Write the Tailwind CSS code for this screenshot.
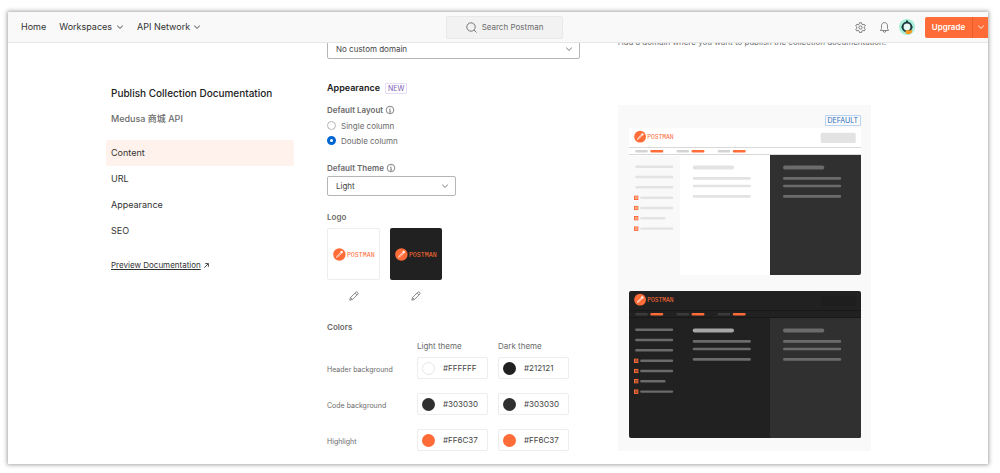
<!DOCTYPE html>
<html lang="en">
<head>
    <meta charset="UTF-8">
    <meta name="viewport" content="width=device-width, initial-scale=1.0">
    <title>Publish Collection Documentation</title>
    <script src="https://cdn.jsdelivr.net/npm/@tailwindcss/browser@4"></script>
</head>
<body class="bg-white pt-3 pr-3 pb-2 pl-2 font-['Inter','Noto_Sans_CJK_SC',sans-serif] text-[8px] leading-4 text-[#6b6b6b] antialiased">

    <!-- Shared icons -->
    <svg class="hidden" aria-hidden="true">
        <symbol id="chevron" viewBox="0 0 8 8"><path d="M1.2 2.7 4 5.4 6.8 2.7" fill="none" stroke="currentColor" stroke-width="0.9"/></symbol>
        <symbol id="info" viewBox="0 0 10 10"><circle cx="5" cy="5" r="3.8" fill="none" stroke="currentColor" stroke-width="0.8"/><path d="M4.2 4.5H5.1V7M4 7.1H6.1M4.6 2.9H5.4" fill="none" stroke="currentColor" stroke-width="0.8"/></symbol>
        <symbol id="pencil" viewBox="0 0 10 10"><path d="M.8 9.2 1.5 6.6 6.9 1.2Q7.7.4 8.6 1.4 9.6 2.3 8.8 3.1L3.4 8.5ZM1.5 6.6 3.4 8.5M6 2.1 7.9 4" fill="none" stroke="currentColor" stroke-width="0.8" stroke-linejoin="round"/></symbol>
        <symbol id="logo" viewBox="0 0 420 130">
            <circle cx="64" cy="65" r="62" fill="#ff6c37"/>
            <path d="M30 99 38 79 76 43 87 54 49 91Z" fill="#fff" fill-opacity=".9"/>
            <circle cx="87" cy="41" r="13" fill="#fff" fill-opacity=".9"/>
            <path d="M42 87 80 49" stroke="#ff6c37" stroke-width="6"/>
            <text x="139" y="87" font-family="Liberation Mono" font-size="66" fill="#ff6c37">POSTMAN</text>
        </symbol>
        <symbol id="method" viewBox="0 0 5 5"><rect x=".6" y=".6" width="3.8" height="3.8" fill="#ff6c37" fill-opacity=".35" stroke="#ff6c37" stroke-width="1.2"/><path d="M1.7 2.5H3.3" stroke="#ff6c37" stroke-width=".8"/></symbol>
        <!-- grey and orange pairs under the header -->
        <symbol id="tabs-orange" viewBox="0 0 232 147"><path d="M22.6 23.3H33M63.8 23.3H74.2M105 23.3H115.4" stroke="#ff6c37" stroke-width="2.6" stroke-linecap="round"/></symbol>
        <symbol id="tabs-grey" viewBox="0 0 232 147"><path d="M7.5 23.3H17.6M48.7 23.3H58.8M89.9 23.3H100" stroke="currentColor" stroke-width="2.6" stroke-linecap="round"/></symbol>
        <symbol id="side-lines" viewBox="0 0 232 147">
            <path d="M7.3 38.7H43M7.3 49H43M7.3 59.3H43M12.3 69.7H43M12.3 80H43M12.3 90.3H35.4M12.3 100.6H43" stroke="currentColor" stroke-width="2.4" stroke-linecap="round"/>
            <use href="#method" x="5" y="67.4" width="4.6" height="4.6"/>
            <use href="#method" x="5" y="77.7" width="4.6" height="4.6"/>
            <use href="#method" x="5" y="88" width="4.6" height="4.6"/>
            <use href="#method" x="5" y="98.3" width="4.6" height="4.6"/>
        </symbol>
        <symbol id="text-lines" viewBox="0 0 232 147"><path d="M65 50.4H120.6M65 58H120.6M65 68.4H120.6" stroke="currentColor" stroke-width="2.6" stroke-linecap="round"/></symbol>
    </svg>

    <div class="bg-white shadow-[0_0_4px_1px_rgba(0,0,0,0.35)]">

        <header class="relative z-10 flex h-[31px] items-center border-b border-[#e6e6e6] bg-[#f9f9f9] pl-2 text-[9px] text-[#333]">
            <nav class="flex flex-1 items-center gap-[13px] pl-[5px]">
                <a href="#">Home</a>
                <button class="flex items-center gap-1">Workspaces <svg class="size-2"><use href="#chevron"/></svg></button>
                <button class="flex items-center gap-[3px]">API Network <svg class="size-2"><use href="#chevron"/></svg></button>
            </nav>
            <button class="flex h-[23px] w-[117px] items-center justify-center gap-[5px] rounded-[2px] border border-[#e9e9e9] bg-[#f2f2f2] text-[8px] text-[#6b6b6b]">
                <svg class="size-[11px]" viewBox="0 0 11 11" fill="none" stroke="currentColor" stroke-width="0.9"><circle cx="5" cy="5" r="4.2"/><path d="M8 8 10.5 10.5"/></svg>
                Search Postman
            </button>
            <div class="flex flex-1 items-center justify-end">
                <button aria-label="Settings" class="mr-[13px] text-[#6b6b6b]">
                    <svg class="size-[11px]" viewBox="0 0 24 24" fill="none" stroke="currentColor" stroke-width="1.8" stroke-linejoin="round"><circle cx="12" cy="12" r="3.6"/><path d="M9.8 1.5h4.4l.7 3.2 2.3 1.3 3.1-1 2.2 3.8-2.4 2.2v2.4l2.4 2.2-2.2 3.8-3.1-1-2.3 1.3-.7 3.2H9.8l-.7-3.2-2.3-1.3-3.1 1-2.2-3.8 2.4-2.2V11L1.5 8.8 3.7 5l3.100 1 2.300-1.300Z"/></svg>
                </button>
                <button aria-label="Notifications" class="mr-[9px] text-[#6b6b6b]">
                    <svg class="size-[11px]" viewBox="0 0 11 11" fill="none" stroke="currentColor" stroke-width="0.8"><path d="M5.5 .6C3.3 .6 2.5 2.3 2.5 4V6.5L1.500 8.500H9.500L8.500 6.500V4C8.500 2.300 7.700 .6 5.500 .6ZM4.300 8.800Q4.300 10.400 5.500 10.400T6.700 8.800"/></svg>
                </button>
                <button aria-label="Account" class="mr-[10px]">
                    <svg class="size-4" viewBox="0 0 16 16"><circle cx="8" cy="8" r="8" fill="#a8f0d8"/><circle cx="8" cy="8" r="4.400" fill="#e9fbf5" stroke="#1f3d3f" stroke-width="2"/><path d="M7 1.500H9V4H7ZM2 8 4 6.500V9.500ZM14 8 12 6.500V9.500Z" fill="#1f3d3f"/><path d="M6.500 12Q8.500 10.200 10.500 11.600L13.500 11 12.500 14Q9.500 16.200 6.700 14.500Z" fill="#f79a1f"/></svg>
                </button>
                <div class="flex h-[21px] overflow-hidden rounded-l-[2px] bg-[#ff6c37] text-white">
                    <button class="w-[47px] text-[8px] font-semibold">Upgrade</button>
                    <button aria-label="More plans" class="flex w-4 items-center justify-center border-l border-[#e85f2e]"><svg class="size-2"><use href="#chevron"/></svg></button>
                </div>
            </div>
        </header>

        <main class="overflow-hidden pr-[117px] pb-[13px] pl-[98px]">
            <div class="-mt-[9px] flex items-start">

                <aside class="mr-[33px] w-[188px] shrink-0 pt-[51px] text-[9px] text-[#333]">
                    <h1 class="pl-[5px] text-[10px] font-medium whitespace-nowrap text-[#212121]">Publish Collection Documentation</h1>
                    <p class="mt-[10px] pl-[5px] font-medium text-[#6b6b6b]">Medusa 商城 API</p>
                    <nav class="mt-[13px] flex flex-col">
                        <a href="#" class="rounded-[2px] bg-[#fff1eb] px-[5px] py-[5px]">Content</a>
                        <a href="#" class="px-[5px] py-[5px]">URL</a>
                        <a href="#" class="px-[5px] py-[5px]">Appearance</a>
                        <a href="#" class="px-[5px] py-[5px]">SEO</a>
                    </nav>
                    <a href="#" class="mt-[13px] flex items-center gap-[3px] pl-[5px] text-[8px]">
                        <span class="underline underline-offset-1">Preview Documentation</span>
                        <svg class="size-[5px]" viewBox="0 0 5 5" fill="none" stroke="currentColor" stroke-width="0.9"><path d="M.4 4.600 4.300 .7M1.200 .6H4.400V3.800"/></svg>
                    </a>
                </aside>

                <form class="flex-1 pt-1">
                    <div class="relative">
                        <select aria-label="Custom domain" class="h-[21px] w-full appearance-none rounded-[2px] border border-[#b5b5b5] bg-white pl-2 text-[#444]"><option>No custom domain</option></select>
                        <svg class="pointer-events-none absolute top-[7px] right-[7px] size-2"><use href="#chevron"/></svg>
                    </div>

                    <div class="mt-[21px] flex items-center gap-[5px]">
                        <h2 class="text-[9px] font-semibold text-[#212121]">Appearance</h2>
                        <span class="rounded-[1px] border border-[#e6dcf7] px-[2px] text-[7px] leading-[9px] text-[#7d5bb5]">NEW</span>
                    </div>

                    <fieldset>
                        <legend class="flex items-center gap-[2px] pt-[6px] font-semibold">Default Layout <svg class="size-[10px]"><use href="#info"/></svg></legend>
                        <label class="flex h-[15px] items-center gap-[5px]">
                            <input type="radio" name="layout" class="size-[9px] appearance-none rounded-full border border-[#b5b5b5] checked:border-3 checked:border-[#0265d2]">
                            Single column
                        </label>
                        <label class="flex h-[15px] items-center gap-[5px]">
                            <input type="radio" name="layout" checked class="size-[9px] appearance-none rounded-full border border-[#b5b5b5] checked:border-3 checked:border-[#0265d2]">
                            Double column
                        </label>
                    </fieldset>

                    <label for="theme" class="mt-3 flex items-center gap-[2px] font-semibold">Default Theme <svg class="size-[10px]"><use href="#info"/></svg></label>
                    <div class="relative w-[129px]">
                        <select id="theme" class="block h-5 w-full appearance-none rounded-[2px] border border-[#b5b5b5] bg-white pl-2 text-[#444]"><option>Light</option></select>
                        <svg class="pointer-events-none absolute top-[6px] right-[7px] size-2"><use href="#chevron"/></svg>
                    </div>

                    <h3 class="mt-[13px] font-semibold">Logo</h3>
                    <div class="mt-[3px] flex gap-[10px]">
                        <div class="flex flex-col items-center gap-2">
                            <div class="flex h-[52px] w-[53px] items-center justify-center rounded-[2px] border border-[#ededed]"><svg class="h-[13px] w-[42px] shrink-0"><use href="#logo"/></svg></div>
                            <button type="button" aria-label="Edit light logo" class="flex size-4 items-center justify-center"><svg class="size-[10px]"><use href="#pencil"/></svg></button>
                        </div>
                        <div class="flex flex-col items-center gap-2">
                            <div class="flex h-[52px] w-[52px] items-center justify-center rounded-[2px] bg-[#212121]"><svg class="h-[13px] w-[42px] shrink-0"><use href="#logo"/></svg></div>
                            <button type="button" aria-label="Edit dark logo" class="flex size-4 items-center justify-center"><svg class="size-[10px]"><use href="#pencil"/></svg></button>
                        </div>
                    </div>

                    <h3 class="mt-[15px] font-semibold">Colors</h3>
                    <div class="mt-[3px] grid grid-cols-[80px_71px_71px] gap-x-[10px]">
                        <span></span>
                        <span>Light theme</span>
                        <span>Dark theme</span>
                    </div>
                    <div class="mt-[3px] grid grid-cols-[80px_71px_71px] items-center gap-x-[10px] gap-y-[14px]">
                        <span class="pt-1 text-[7px] whitespace-nowrap">Header background</span>
                        <label class="flex h-[22px] items-center gap-2 rounded-[2px] border border-[#ededed] pl-1">
                            <span class="size-[13px] shrink-0 rounded-full border border-[#e6e6e6] bg-white"></span>
                            <input aria-label="Header background, light theme" value="#FFFFFF" class="w-full min-w-0 text-[#444]">
                        </label>
                        <label class="flex h-[22px] items-center gap-2 rounded-[2px] border border-[#ededed] pl-1">
                            <span class="size-[13px] shrink-0 rounded-full bg-[#212121]"></span>
                            <input aria-label="Header background, dark theme" value="#212121" class="w-full min-w-0 text-[#444]">
                        </label>

                        <span class="pt-1 text-[7px] whitespace-nowrap">Code background</span>
                        <label class="flex h-[22px] items-center gap-2 rounded-[2px] border border-[#ededed] pl-1">
                            <span class="size-[13px] shrink-0 rounded-full bg-[#303030]"></span>
                            <input aria-label="Code background, light theme" value="#303030" class="w-full min-w-0 text-[#444]">
                        </label>
                        <label class="flex h-[22px] items-center gap-2 rounded-[2px] border border-[#ededed] pl-1">
                            <span class="size-[13px] shrink-0 rounded-full bg-[#303030]"></span>
                            <input aria-label="Code background, dark theme" value="#303030" class="w-full min-w-0 text-[#444]">
                        </label>

                        <span class="pt-1 text-[7px] whitespace-nowrap">Highlight</span>
                        <label class="flex h-[22px] items-center gap-2 rounded-[2px] border border-[#ededed] pl-1">
                            <span class="size-[13px] shrink-0 rounded-full bg-[#ff6c37]"></span>
                            <input aria-label="Highlight, light theme" value="#FF6C37" class="w-full min-w-0 text-[#444]">
                        </label>
                        <label class="flex h-[22px] items-center gap-2 rounded-[2px] border border-[#ededed] pl-1">
                            <span class="size-[13px] shrink-0 rounded-full bg-[#ff6c37]"></span>
                            <input aria-label="Highlight, dark theme" value="#FF6C37" class="w-full min-w-0 text-[#444]">
                        </label>
                    </div>
                </form>

                <section class="ml-[38px] w-[253px] shrink-0">
                    <p class="whitespace-nowrap">Add a domain where you want to publish the collection documentation.</p>
                    <div class="mt-[55px] flex flex-col bg-[#f9f9f9] pt-[10px] pr-[10px] pb-[13px] pl-[11px]">
                        <span class="mb-[2px] self-end rounded-[1px] border border-[#b9d3f3] px-[2px] text-[7px] leading-[9px] text-[#2a6fc0]">DEFAULT</span>

                        <!-- Light preview -->
                        <svg class="h-[147px] w-full rounded-[2px] text-[#e3e3e3]" viewBox="0 0 232 147" role="img" aria-label="Light theme preview">
                            <path d="M0 0H232V147H0Z" fill="#fff"/>
                            <path d="M0 28H51V147H0Z" fill="#f9f9f9"/>
                            <path d="M141 27H232V147H141Z" fill="#303030"/>
                            <path d="M0 19.500H232M0 26.500H232" stroke="#d9d9d9"/>
                            <rect x="191.700" y="4.700" width="35" height="10.300" rx="1.500" fill="#e3e3e3"/>
                            <use href="#logo" x="5" y="2.500" width="40" height="12.400"/>
                            <use href="#tabs-grey" class="text-[#d4d4d4]"/>
                            <use href="#tabs-orange"/>
                            <use href="#side-lines"/>
                            <path d="M65.700 39.400H103" stroke="#e3e3e3" stroke-width="4" stroke-linecap="round"/>
                            <use href="#text-lines"/>
                            <path d="M156 39.400H193.300" stroke="#6b6b6b" stroke-width="4" stroke-linecap="round"/>
                            <use href="#text-lines" x="90.300" width="232" height="147" class="text-[#6b6b6b]"/>
                        </svg>

                        <!-- Dark preview -->
                        <svg class="mt-4 h-[147px] w-full rounded-[2px] text-[#6b6b6b]" viewBox="0 0 232 147" role="img" aria-label="Dark theme preview">
                            <path d="M0 0H232V147H0Z" fill="#212121"/>
                            <path d="M141 27H232V147H141Z" fill="#303030"/>
                            <path d="M0 19.500H232M0 26.500H232" stroke="#181818"/>
                            <rect x="191.700" y="4.700" width="35" height="10.300" rx="1.500" fill="#1e1e1e"/>
                            <use href="#logo" x="5" y="2.500" width="40" height="12.400"/>
                            <use href="#tabs-grey" class="text-[#3b3b3b]"/>
                            <use href="#tabs-orange"/>
                            <use href="#side-lines"/>
                            <path d="M65.700 39.400H103" stroke="#a6a6a6" stroke-width="4" stroke-linecap="round"/>
                            <use href="#text-lines"/>
                            <path d="M156 39.400H193.300" stroke="#6b6b6b" stroke-width="4" stroke-linecap="round"/>
                            <use href="#text-lines" x="90.300" width="232" height="147"/>
                        </svg>
                    </div>
                </section>
            </div>
        </main>
    </div>

</body>
</html>
